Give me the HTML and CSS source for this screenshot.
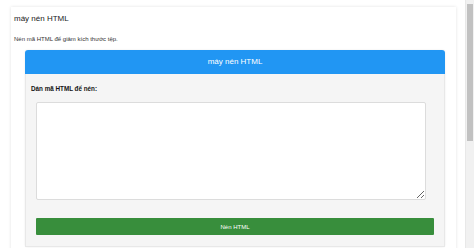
FILE: index.html
```html
<!DOCTYPE html>
<html lang="vi">
<head>
<meta charset="utf-8">
<title>máy nén HTML</title>
<link rel="stylesheet" href="styles.css">
</head>
<body>
<div class="container">
  <h1 class="title">máy nén HTML</h1>
  <p class="intro">Nén mã HTML để giảm kích thước tệp.</p>
  <div class="card">
    <div class="card-header">máy nén HTML</div>
    <div class="card-body">
      <label class="field-label" for="src">Dán mã HTML để nén:</label>
      <textarea id="src" class="code-input"></textarea>
      <button class="btn-compress" type="button">Nén HTML</button>
    </div>
  </div>
</div>
<div class="scrollbar" aria-hidden="true"><div class="scrollbar-thumb"></div></div>
</body>
</html>
```

FILE: styles.css
```css
html::-webkit-scrollbar { width: 0; height: 0; }

body {
  margin: 0;
  padding-bottom: 168px;
  background: #ffffff;
  font-family: "Liberation Sans", Arial, sans-serif;
  color: #222;
}

.container {
  margin: 7px 18px 0 11px;
  padding: 7px 3px 20px;
  background: #fff;
  box-shadow: 0 0 3px rgba(0, 0, 0, 0.12);
}

.title {
  margin: 0;
  font-size: 8px;
  line-height: 10px;
  font-weight: normal;
  color: #222;
}

.intro {
  margin: 10.5px 0 7.5px;
  font-size: 6px;
  line-height: 8px;
  color: #333;
}

.card {
  margin-left: 11px;
  width: 420px;
  border-radius: 3px;
  box-shadow: 0 0 2px rgba(0, 0, 0, 0.1);
}

.card-header {
  height: 24px;
  line-height: 24px;
  background: #2196f3;
  color: #fff;
  font-size: 8px;
  text-align: center;
  border-radius: 3px 3px 0 0;
}

.card-body {
  display: flex;
  flex-direction: column;
  align-items: flex-start;
  background: #f5f5f5;
  border: 1px solid #e8e8e8;
  border-top: none;
  padding: 11px 10px 11px 5px;
}

.field-label {
  font-size: 6.3px;
  line-height: 8px;
  font-weight: bold;
  color: #111;
}

.code-input {
  box-sizing: border-box;
  margin: 9px 0 0 5px;
  width: 390px;
  height: 98px;
  padding: 4px;
  background: #fff;
  border: 1px solid #dcdcdc;
  border-radius: 2px;
  font-size: 6px;
}

.btn-compress {
  margin: 18px 0 0 5px;
  width: 398px;
  height: 17px;
  padding: 0;
  border: none;
  border-radius: 1px;
  background: #388e3c;
  color: #fff;
  font-family: "Liberation Sans", Arial, sans-serif;
  font-size: 6px;
}

.scrollbar {
  position: fixed;
  top: 0;
  right: 0;
  bottom: 0;
  width: 9px;
  background: #f1f1f1;
  border-left: 1px solid #e8e8e8;
  box-sizing: border-box;
}

.scrollbar-thumb {
  margin: 4px 1px 0 1px;
  height: 137px;
  background: #c1c1c1;
}
```
